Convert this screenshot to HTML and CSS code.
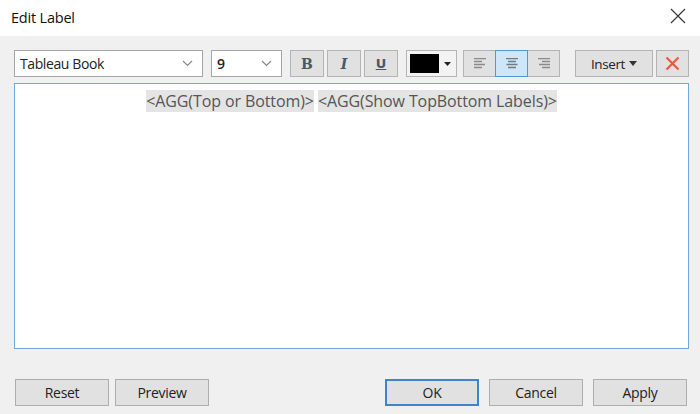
FILE: index.html
```html
<!DOCTYPE html>
<html>
<head>
<meta charset="utf-8">
<link rel="stylesheet" href="styles.css">
</head>
<body>
<div class="dialog">
  <div class="titlebar">
    <span class="title">Edit Label</span>
    <svg class="close" width="16" height="16" viewBox="0 0 16 16"><path d="M1 1 L15 15 M15 1 L1 15" stroke="#333" stroke-width="1.1" fill="none"/></svg>
  </div>
  <div class="content">
    <div class="toolbar">
      <div class="combo font-combo"><span>Tableau Book</span><svg width="11" height="7" viewBox="0 0 11 7"><path d="M1 1 L5.5 5.5 L10 1" stroke="#888" stroke-width="1.2" fill="none"/></svg></div>
      <div class="combo size-combo"><span>9</span><svg width="11" height="7" viewBox="0 0 11 7"><path d="M1 1 L5.5 5.5 L10 1" stroke="#888" stroke-width="1.2" fill="none"/></svg></div>
      <div class="tbtn fmt b">B</div>
      <div class="tbtn fmt i">I</div>
      <div class="tbtn fmt u">U</div>
      <div class="tbtn color"><span class="swatch"></span><svg width="7" height="4" viewBox="0 0 7 4"><path d="M0 0 L7 0 L3.5 4 Z" fill="#222"/></svg></div>
      <div class="align-group">
        <div class="tbtn al"><svg width="12" height="11" viewBox="0 0 12 11"><path d="M0 0.5h12M0 3.5h8M0 6.5h11M0 9.5h8" stroke="#8a8a8a" stroke-width="1.3"/></svg></div>
        <div class="tbtn al active"><svg width="12" height="11" viewBox="0 0 12 11"><path d="M0 0.5h12M2 3.5h8M0.5 6.5h11M2 9.5h8" stroke="#7a7a7a" stroke-width="1.3"/></svg></div>
        <div class="tbtn al"><svg width="12" height="11" viewBox="0 0 12 11"><path d="M0 0.5h12M4 3.5h8M1 6.5h11M4 9.5h8" stroke="#8a8a8a" stroke-width="1.3"/></svg></div>
      </div>
      <div class="tbtn insert">Insert<svg width="8" height="5" viewBox="0 0 8 5"><path d="M0 0 L8 0 L4 5 Z" fill="#333"/></svg></div>
      <div class="tbtn del"><svg width="15" height="15" viewBox="0 0 15 15"><path d="M1.5 1.5 L13.5 13.5 M13.5 1.5 L1.5 13.5" stroke="#e0603c" stroke-width="2.2" fill="none"/></svg></div>
    </div>
    <div class="editor">
      <div class="line"><span class="field">&lt;AGG(Top or Bottom)&gt;</span> <span class="field">&lt;AGG(Show TopBottom Labels)&gt;</span></div>
    </div>
    <div class="footer">
      <div class="left">
        <div class="btn">Reset</div>
        <div class="btn">Preview</div>
      </div>
      <div class="right">
        <div class="btn ok">OK</div>
        <div class="btn">Cancel</div>
        <div class="btn">Apply</div>
      </div>
    </div>
  </div>
</div>
</body>
</html>
```

FILE: styles.css
```css
* { box-sizing: border-box; }
html, body { margin: 0; padding: 0; }
body { background: #f0f0f0; font-family: "Open Sans", "Noto Sans", "Liberation Sans", sans-serif; }
.dialog { width: 700px; height: 414px; background: #f0f0f0; overflow: hidden; }
.titlebar { height: 36px; background: #ffffff; display: flex; align-items: center; justify-content: space-between; padding: 0 12px 2px 11px; }
.title { font-size: 14.5px; color: #111; letter-spacing: -0.2px; }
.close { margin-right: 2px; margin-bottom: 2px; }
.content { padding: 14px 11px 0 14px; }
.toolbar { display: flex; align-items: center; height: 27px; }
.combo { height: 27px; background: #fff; border: 1px solid #a5a5a5; display: flex; align-items: center; justify-content: space-between; padding: 0 9px 0 5px; font-size: 14px; color: #222; letter-spacing: -0.4px; }
.font-combo { width: 189px; }
.size-combo { width: 71px; margin-left: 8px; font-weight: 600; }
.tbtn { height: 27px; background: #e1e1e1; border: 1px solid #b4b4b4; display: flex; align-items: center; justify-content: center; }
.fmt { width: 34px; font-family: "DejaVu Serif", serif; font-size: 14px; color: #4d5866; font-weight: bold; }
.b { margin-left: 8px; }
.i { margin-left: 3px; font-style: italic; }
.u { margin-left: 3px; text-decoration: underline; font-family: "DejaVu Sans", sans-serif; font-size: 13px; }
.color { width: 51px; margin-left: 8px; background: #f3f3f3; justify-content: flex-start; padding-left: 3px; }
.swatch { width: 29px; height: 19px; background: #000; margin-right: 5px; }
.align-group { display: flex; margin-left: 6px; }
.al { width: 33px; }
.al.active { background: #cde6fa; border-color: #4a9ae0; width: 33px; margin: 0 -1px; position: relative; z-index: 1; }
.insert { width: 78px; margin-left: 15px; font-size: 13.5px; color: #222; letter-spacing: -0.4px; gap: 4px; }
.del { width: 33px; margin-left: 3px; }
.editor { margin-top: 6px; width: 675px; height: 266px; background: #fff; border: 1px solid #6fa8dc; padding-top: 6px; }
.line { text-align: center; font-size: 16px; color: #555; line-height: 22px; letter-spacing: -0.1px; }
.field { background: #e4e4e4; }
.footer { display: flex; justify-content: space-between; margin-top: 30px; padding-left: 1px; padding-right: 2px; }
.left, .right { display: flex; }
.btn { width: 94px; height: 27px; background: #e1e1e1; border: 1px solid #adadad; display: flex; align-items: center; justify-content: center; font-size: 14px; color: #222; letter-spacing: -0.3px; }
.left .btn + .btn { margin-left: 6px; }
.right .btn + .btn { margin-left: 10px; }
.ok { border: 2px solid #3d86cf; }
```
